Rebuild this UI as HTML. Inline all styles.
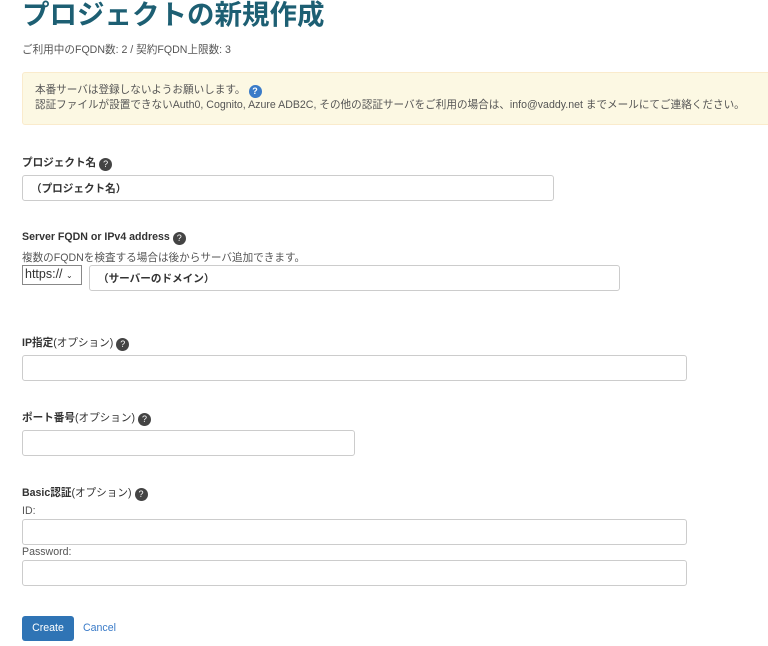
<!DOCTYPE html>
<html><head><meta charset="utf-8"><style>
body{margin:0;width:768px;height:646px;overflow:hidden;background:#fff;font-family:"Liberation Sans","Noto Sans CJK JP",sans-serif;color:#333;position:relative}
.a{position:absolute;white-space:nowrap}
h1{position:absolute;left:22px;top:-8px;margin:0;font-size:27.5px;font-weight:bold;color:#1d5f73;white-space:nowrap}
.s{font-size:10.6px;color:#555}
.lb{font-size:10.6px;font-weight:bold;color:#333}
.lb span{font-weight:normal}
.q{display:inline-block;width:13px;height:13px;border-radius:50%;background:#444;color:#fff;font-size:9px;font-weight:bold;text-align:center;line-height:13px;vertical-align:-1px;margin-left:3px}
.in{position:absolute;border:1px solid #ccc;border-radius:3px;background:#fff;box-sizing:border-box;font-size:10.6px;font-weight:bold;padding-left:8px;display:flex;align-items:center}
.alert{position:absolute;left:22px;top:72px;width:760px;height:53px;background:#fcf8e3;border:1px solid #faebcc;border-radius:3px;box-sizing:border-box;font-size:10.6px;color:#555;padding:10px 0 0 12px;line-height:15px}
</style></head><body>
<h1>プロジェクトの新規作成</h1>
<div class="a s" style="left:22px;top:42px">ご利用中のFQDN数: 2 / 契約FQDN上限数: 3</div>
<div class="alert">本番サーバは登録しないようお願いします。<span class="q" style="background:#3a7bc8">?</span><br>認証ファイルが設置できないAuth0, Cognito, Azure ADB2C, その他の認証サーバをご利用の場合は、info@vaddy.net までメールにてご連絡ください。</div>
<div class="a lb" style="left:22px;top:155px">プロジェクト名<span class="q">?</span></div>
<div class="in" style="left:22px;top:175px;width:532px;height:26px">（プロジェクト名）</div>
<div class="a lb" style="left:22px;top:231px">Server FQDN or IPv4 address<span class="q">?</span></div>
<div class="a s" style="left:22px;top:250px">複数のFQDNを検査する場合は後からサーバ追加できます。</div>
<div class="a" style="left:22px;top:265px;width:60px;height:20px;border:1px solid #888;box-sizing:border-box;font-size:12.5px;padding:1px 0 0 2px">https:// <span style="font-size:8px">⌄</span></div>
<div class="in" style="left:89px;top:265px;width:531px;height:26px">（サーバーのドメイン）</div>
<div class="a lb" style="left:22px;top:335px">IP指定<span>(オプション)</span><span class="q">?</span></div>
<div class="in" style="left:22px;top:355px;width:665px;height:26px"></div>
<div class="a lb" style="left:22px;top:410px">ポート番号<span>(オプション)</span><span class="q">?</span></div>
<div class="in" style="left:22px;top:430px;width:333px;height:26px"></div>
<div class="a lb" style="left:22px;top:485px">Basic認証<span>(オプション)</span><span class="q">?</span></div>
<div class="a s" style="left:22px;top:505px">ID:</div>
<div class="in" style="left:22px;top:519px;width:665px;height:26px"></div>
<div class="a s" style="left:22px;top:546px">Password:</div>
<div class="in" style="left:22px;top:560px;width:665px;height:26px"></div>
<div class="a" style="left:22px;top:616px;width:52px;height:25px;background:#2f74b5;border-radius:3px;color:#fff;font-size:10.6px;text-align:center;line-height:25px">Create</div>
<div class="a" style="left:83px;top:622px;font-size:10.6px;color:#3a7bc8">Cancel</div>
</body></html>
